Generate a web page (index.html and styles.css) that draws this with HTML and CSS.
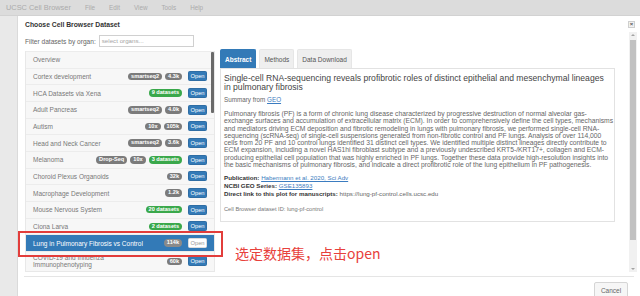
FILE: index.html
```html
<!DOCTYPE html>
<html lang="en">

<head>
    <meta charset="utf-8">
    <meta name="viewport" content="width=device-width, initial-scale=1.0">
    <title>UCSC Cell Browser</title>
    <link rel="stylesheet" href="styles.css">
</head>

<body>
    <nav class="menubar">
        <span class="brand">UCSC Cell Browser</span>
        <span>File</span>
        <span>Edit</span>
        <span>View</span>
        <span>Tools</span>
        <span>Help</span>
    </nav>

    <div class="stage">
        <div class="gutter"></div>

        <section class="dialog">
            <header class="dlg-head">
                <span class="dlg-title">Choose Cell Browser Dataset</span>
                <button class="dlg-close">&#215;</button>
            </header>

            <div class="dlg-body">
                <div class="dlg-main">
                    <div class="filter">
                        <label>Filter datasets by organ:</label>
                        <div class="select">select organs...</div>
                    </div>

                    <div class="cols">
                        <ul class="list">
                            <li><span class="name">Overview</span></li>
                            <li><span class="name">Cortex development</span><span class="badge">smartseq2</span><span class="badge">4.3k</span><span class="open">Open</span></li>
                            <li><span class="name">HCA Datasets via Xena</span><span class="badge green">9 datasets</span><span class="open">Open</span></li>
                            <li><span class="name">Adult Pancreas</span><span class="badge">smartseq2</span><span class="badge">4.0k</span><span class="open">Open</span></li>
                            <li><span class="name">Autism</span><span class="badge">10x</span><span class="badge">105k</span><span class="open">Open</span></li>
                            <li><span class="name">Head and Neck Cancer</span><span class="badge">smartseq2</span><span class="badge">3.6k</span><span class="open">Open</span></li>
                            <li><span class="name">Melanoma</span><span class="badge">Drop-Seq</span><span class="badge">10x</span><span class="badge green">3 datasets</span><span class="open">Open</span></li>
                            <li><span class="name">Choroid Plexus Organoids</span><span class="badge">32k</span><span class="open">Open</span></li>
                            <li><span class="name">Macrophage Development</span><span class="badge">1.2k</span><span class="open">Open</span></li>
                            <li><span class="name">Mouse Nervous System</span><span class="badge green">20 datasets</span><span class="open">Open</span></li>
                            <li><span class="name">Ciona Larva</span><span class="badge green">2 datasets</span><span class="open">Open</span></li>
                            <li class="active"><span class="name">Lung in Pulmonary Fibrosis vs Control</span><span class="badge">114k</span><span class="open">Open</span></li>
                            <li class="tall"><span class="name">COVID-19 and Influenza<br>Immunophenotyping</span><span class="badge">60k</span><span class="open">Open</span></li>
                        </ul>

                        <div class="info">
                            <div class="tabs">
                                <span class="tab active">Abstract</span>
                                <span class="tab">Methods</span>
                                <span class="tab">Data Download</span>
                            </div>
                            <div class="panel">
                                <h3>Single-cell RNA-sequencing reveals profibrotic roles of distinct epithelial and mesenchymal lineages in pulmonary fibrosis</h3>
                                <p class="summary">Summary from <a href="#">GEO</a></p>
                                <p class="abstract">Pulmonary fibrosis (PF) is a form of chronic lung disease characterized by progressive destruction of normal alveolar gas-<br>exchange surfaces and accumulation of extracellular matrix (ECM). In order to comprehensively define the cell types, mechanisms<br>and mediators driving ECM deposition and fibrotic remodeling in lungs with pulmonary fibrosis, we performed single-cell RNA-<br>sequencing (scRNA-seq) of single-cell suspensions generated from non-fibrotic control and PF lungs. Analysis of over 114,000<br>cells from 20 PF and 10 control lungs identified 31 distinct cell types. We identified multiple distinct lineages directly contribute to<br>ECM expansion, including a novel HAS1hi fibroblast subtype and a previously undescribed KRT5-/KRT17+, collagen and ECM-<br>producing epithelial cell population that was highly enriched in PF lungs. Together these data provide high-resolution insights into<br>the basic mechanisms of pulmonary fibrosis, and indicate a direct profibrotic role of the lung epithelium in PF pathogenesis.</p>
                                <p class="meta">
                                    <b>Publication:</b> <a href="#">Habermann et al. 2020, Sci Adv</a><br>
                                    <b>NCBI GEO Series:</b> <a href="#">GSE135893</a><br>
                                    <b>Direct link to this plot for manuscripts:</b> https://lung-pf-control.cells.ucsc.edu
                                </p>
                                <p class="dsid">Cell Browser dataset ID: lung-pf-control</p>
                            </div>
                            <p class="note">选定数据集，点击open</p>
                        </div>
                    </div>
                </div>

                <div class="vscroll">
                    <span class="arr up"></span>
                    <span class="thumb"></span>
                    <span class="arr down"></span>
                </div>
            </div>

            <footer class="dlg-foot">
                <button class="cancel">Cancel</button>
            </footer>
        </section>
    </div>
</body>

</html>
```

FILE: styles.css
```css
/****GENERAL****/

* {
    box-sizing: border-box;
}

body {
    margin: 0;
    width: 640px;
    height: 296px;
    overflow: hidden;
    background-color: #e9e9e9;
    font-family: "Liberation Sans", Arial, sans-serif;
    color: #555;
}

a {
    color: #3b7cc0;
}

p {
    margin: 0;
}

/****MENUBAR****/

.menubar {
    display: flex;
    align-items: center;
    gap: 14px;
    height: 16px;
    padding: 0 6px 1px;
    background-color: #dcdcdc;
    border-bottom: 1px solid #d2d2d2;
    color: #ababab;
    font-size: 6.3px;
}

.brand {
    font-size: 7.4px;
}

/****DIALOG****/

.stage {
    display: flex;
    height: 280px;
}

.gutter {
    width: 17px;
    flex: none;
}

.dialog {
    flex: 1;
    display: flex;
    flex-direction: column;
    background-color: #fff;
    border-left: 1px solid #dadada;
}

.dlg-head {
    display: flex;
    align-items: center;
    justify-content: space-between;
    height: 16px;
    flex: none;
    padding: 0 5px 0 7px;
}

.dlg-title {
    font-size: 6.8px;
    font-weight: bold;
    color: #333;
}

.dlg-close {
    width: 7px;
    height: 7px;
    padding: 0;
    border: 1px solid #cfcfcf;
    background-color: #f2f2f2;
    color: #555;
    font-size: 6px;
    line-height: 4px;
    font-weight: bold;
}

.dlg-body {
    display: flex;
    height: 244px;
    flex: none;
}

.dlg-main {
    flex: 1;
    padding-left: 7px;
}

.filter {
    display: flex;
    align-items: center;
    gap: 3px;
    height: 12px;
    margin-top: 3px;
    font-size: 6.6px;
    color: #666;
}

.select {
    width: 95px;
    height: 12px;
    padding: 0 2px;
    border: 1px solid #d0d0d0;
    color: #a5a5a5;
    font-size: 6.2px;
    line-height: 10px;
}

.cols {
    display: flex;
    align-items: flex-start;
    margin-top: 2px;
}

/****LIST****/

.list {
    position: relative;
    width: 190px;
    margin: 2px 0 0;
    padding: 0;
    list-style: none;
    background-color: #f7f7f7;
    border: 1px solid #e8e8e8;
    border-top: none;
}

.list::before {
    content: "";
    position: absolute;
    top: 1px;
    right: 0;
    width: 3px;
    height: 61px;
    background-color: #6a6a6a;
    border-radius: 1px;
}

.list li {
    display: flex;
    align-items: center;
    gap: 3px;
    height: 16.67px;
    padding: 0 7px;
    border-top: 1px solid #ececec;
    font-size: 6.5px;
    color: #777;
}

.list li.tall {
    height: 20px;
    line-height: 7.3px;
}

.name {
    flex: 1;
}

.badge {
    height: 7.5px;
    padding: 0 3px;
    border-radius: 4px;
    background-color: #7b7b7b;
    color: #fff;
    font-size: 5.6px;
    font-weight: bold;
    line-height: 7.5px;
}

.badge.green {
    background-color: #3aa84b;
}

.open {
    width: 19px;
    height: 10px;
    margin-left: 3px;
    border: 1px solid #2e6da4;
    border-radius: 1.5px;
    background-color: #337ab7;
    color: #fff;
    font-size: 5.8px;
    line-height: 8px;
    text-align: center;
}

.list li.active {
    position: relative;
    background-color: #337ab7;
    color: #fff;
}

.list li.active::after {
    content: "";
    position: absolute;
    top: -4px;
    bottom: -6px;
    left: -8px;
    right: -9px;
    border: 2px solid #e23d3b;
}

.active .badge {
    background-color: #8a8a8a;
}

.active .open {
    background-color: #fff;
    border-color: #ddd;
    color: #999;
}

/****INFO****/

.info {
    width: 395px;
    margin-left: 5px;
}

.tabs {
    display: flex;
    gap: 3px;
}

.tab {
    display: flex;
    align-items: center;
    height: 19px;
    padding: 0 4px;
    background-color: #efefef;
    border: 1px solid #e6e6e6;
    border-bottom: none;
    border-radius: 2px 2px 0 0;
    color: #555;
    font-size: 6.5px;
}

.tab.active {
    background-color: #337ab7;
    border-color: #337ab7;
    color: #fff;
    font-weight: bold;
}

.panel {
    height: 154px;
    padding: 5px 3px 0;
    border: 1px solid #e2e2e2;
}

.panel h3 {
    margin: 0 4px 0 0;
    font-size: 8.6px;
    line-height: 9px;
    font-weight: normal;
    color: #444;
}

.summary {
    margin-top: 4px;
    font-size: 6.3px;
    line-height: 8px;
    color: #666;
}

.abstract {
    margin-top: 6px;
    font-size: 6.75px;
    line-height: 7.3px;
    color: #666;
    white-space: nowrap;
}

.meta {
    margin-top: 5.5px;
    font-size: 6.2px;
    line-height: 8.3px;
    color: #666;
}

.meta b {
    color: #333;
}

.dsid {
    margin-top: 7px;
    font-size: 5.7px;
    line-height: 7px;
    color: #777;
}

.note {
    margin: 21px 0 0 15px;
    font-family: "Noto Sans CJK SC", sans-serif;
    font-size: 14px;
    line-height: 20px;
    color: #e8413c;
}

/****SCROLLBAR****/

.vscroll {
    display: flex;
    flex-direction: column;
    align-items: center;
    width: 8px;
    margin: 0 3px 4px 0;
    padding: 2px 0;
    background-color: #f1f1f1;
}

.arr {
    width: 0;
    height: 0;
    border-left: 2px solid transparent;
    border-right: 2px solid transparent;
}

.arr.up {
    border-bottom: 2px solid #a3a3a3;
}

.arr.down {
    margin-top: auto;
    border-top: 2px solid #a3a3a3;
}

.thumb {
    width: 6px;
    height: 200px;
    margin-top: 4px;
    background-color: #c1c1c1;
}

/****FOOTER****/

.dlg-foot {
    display: flex;
    justify-content: flex-end;
    margin: 0 6px;
    padding: 5px 6px 0 0;
    border-top: 1px solid #e5e5e5;
}

.cancel {
    width: 34px;
    height: 16px;
    padding: 0;
    border: 1px solid #d5d5d5;
    border-radius: 2px;
    background-color: #f6f6f6;
    color: #666;
    font-family: "Liberation Sans", Arial, sans-serif;
    font-size: 6.5px;
}
```
